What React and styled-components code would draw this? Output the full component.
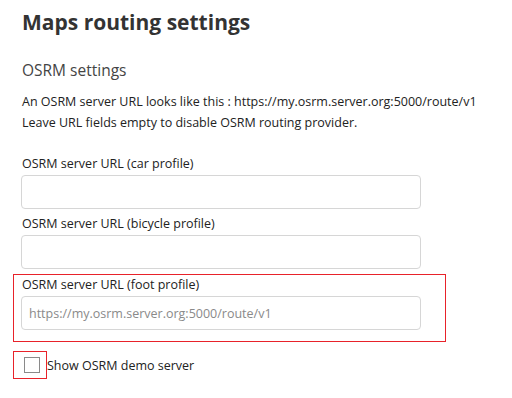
import styled, { createGlobalStyle } from "styled-components";

const Global = createGlobalStyle`
  html, body { margin: 0; padding: 0; background: #fff; }
  body { font-family: "Open Sans", "Noto Sans", sans-serif; color: #333; }
  * { box-sizing: border-box; }
`;

const Page = styled.div`
  width: 512px;
  height: 398px;
  padding: 8px 21px 0 21px;
  overflow: hidden;
`;

const Title = styled.h2`
  margin: 0 0 0 1px;
  font-size: 21px;
  font-weight: 700;
  line-height: 28px;
  color: #333;
`;

const Subtitle = styled.h3`
  margin: 23px 0 0 1px;
  font-size: 15.5px;
  font-weight: 400;
  line-height: 22px;
  color: #444;
`;

const Help = styled.p`
  margin: 10px 0 0 1px;
  font-size: 12.5px;
  line-height: 21px;
  color: #222;
`;

const Fields = styled.div`
  margin-top: 21px;
  display: flex;
  flex-direction: column;
  align-items: flex-start;
`;

const Group = styled.div`
  display: flex;
  flex-direction: column;
  margin-left: ${(p) => (p.$marked ? "-8px" : "0")};
  padding: ${(p) => (p.$marked ? "0 24px 11px 7px" : "0 0 5px 0")};
  border: ${(p) => (p.$marked ? "1px solid #e8222a" : "none")};
`;

const Label = styled.label`
  font-size: 12.5px;
  line-height: 19px;
  color: #222;
  margin: 0 0 2px 1px;
`;

const Input = styled.input`
  width: 400px;
  height: 34px;
  border: 1px solid #d6d6d6;
  border-radius: 4px;
  padding: 0 7px;
  font-family: inherit;
  font-size: 12.5px;
  color: #333;
  outline: none;
  &::placeholder { color: #8a8a8a; }
`;

const CheckRow = styled.label`
  margin-top: 9px;
  display: flex;
  align-items: center;
  font-size: 12.5px;
  color: #222;
`;

const BoxMark = styled.span`
  margin-left: -8px;
  width: 34px;
  height: 28px;
  border: 1px solid #e8222a;
  display: flex;
  align-items: center;
  padding-left: 10px;
`;

const Check = styled.span`
  width: 16px;
  height: 16px;
  border: 1px solid #8a8a8a;
  background: #fff;
`;

const fields = [
  { label: "OSRM server URL (car profile)" },
  { label: "OSRM server URL (bicycle profile)" },
  {
    label: "OSRM server URL (foot profile)",
    placeholder: "https://my.osrm.server.org:5000/route/v1",
    marked: true,
  },
];

export default function App() {
  return (
    <>
      <Global />
      <Page>
        <Title>Maps routing settings</Title>
        <Subtitle>OSRM settings</Subtitle>
        <Help>
          An OSRM server URL looks like this : https://my.osrm.server.org:5000/route/v1
          <br />
          Leave URL fields empty to disable OSRM routing provider.
        </Help>
        <Fields>
          {fields.map((f) => (
            <Group key={f.label} $marked={f.marked}>
              <Label>{f.label}</Label>
              <Input type="text" placeholder={f.placeholder || ""} />
            </Group>
          ))}
        </Fields>
        <CheckRow>
          <BoxMark>
            <Check />
          </BoxMark>
          Show OSRM demo server
        </CheckRow>
      </Page>
    </>
  );
}
